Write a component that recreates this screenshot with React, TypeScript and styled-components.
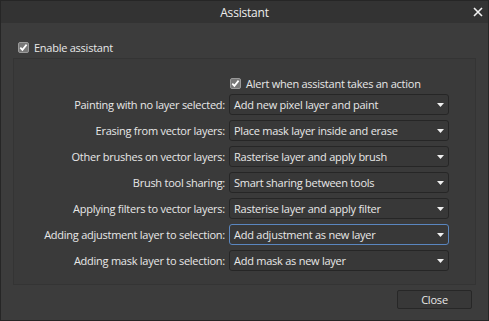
import React from 'react';
import styled, { createGlobalStyle } from 'styled-components';

const GlobalStyle = createGlobalStyle`
  html, body {
    margin: 0;
    padding: 0;
    background: #2b2b2b;
  }
  body {
    font-family: 'Open Sans', 'Noto Sans', sans-serif;
    font-size: 11px;
    letter-spacing: -0.25px;
    color: #e8e8e8;
  }
`;

const Dialog = styled.div`
  width: 489px;
  height: 321px;
  box-sizing: border-box;
  border: 1px solid #262626;
  background: #3c3c3c;
  display: flex;
  flex-direction: column;
`;

const TitleBar = styled.div`
  position: relative;
  height: 22px;
  background: #333333;
  display: flex;
  align-items: center;
  justify-content: center;
  font-size: 12px;
  letter-spacing: -0.2px;
  color: #eeeeee;
`;

const CloseX = styled.button`
  position: absolute;
  right: 5px;
  top: 6px;
  width: 10px;
  height: 10px;
  padding: 0;
  border: 0;
  background: transparent;
  display: flex;
`;

const Body = styled.div`
  flex: 1;
  display: flex;
  flex-direction: column;
  padding: 17px 12px 0 12px;
`;

const CheckRow = styled.label<{ indent?: number }>`
  display: flex;
  align-items: center;
  gap: 5px;
  height: 14px;
  padding-left: ${(p) => p.indent ?? 0}px;
  white-space: nowrap;
`;

const GroupBox = styled.div`
  margin-top: 4px;
  height: 227px;
  box-sizing: border-box;
  border: 1px solid #343434;
  background: #3a3a3a;
  padding: 18px 26px 0 0;
  display: grid;
  grid-template-columns: 211px 220px;
  grid-template-rows: 12px;
  column-gap: 4px;
  row-gap: 5px;
  grid-auto-rows: 21px;
  align-items: center;
  align-content: start;
`;

const Label = styled.div`
  text-align: right;
  white-space: nowrap;
`;

const Select = styled.div<{ focused?: boolean }>`
  height: 21px;
  box-sizing: border-box;
  border: 1px solid ${(p) => (p.focused ? '#5a86bf' : '#262626')};
  border-radius: 3px;
  background: #383838;
  display: flex;
  align-items: center;
  justify-content: space-between;
  padding: 0 4px 0 4px;
  white-space: nowrap;
`;

const Footer = styled.div`
  flex: 1;
  display: flex;
  justify-content: flex-end;
  align-items: flex-start;
  padding: 5px 4px 0 0;
`;

const Button = styled.button`
  width: 75px;
  height: 19px;
  box-sizing: border-box;
  border: 1px solid #272727;
  border-radius: 2px;
  background: #383838;
  color: #e8e8e8;
  font-family: inherit;
  font-size: 11px;
  letter-spacing: -0.2px;
  padding: 0;
`;

const Check = () => (
  <svg width="11" height="11" viewBox="0 0 11 11">
    <rect x="0.5" y="0.5" width="10" height="10" rx="1.5" fill="#777777" stroke="#9a9a9a" />
    <path d="M2.3 5.6 L4.4 7.9 L8.6 2.6" fill="none" stroke="#ffffff" strokeWidth="1.7" />
  </svg>
);

const Arrow = () => (
  <svg width="7" height="4" viewBox="0 0 7 4">
    <path d="M0 0 H7 L3.5 4 Z" fill="#f0f0f0" />
  </svg>
);

const rows: { label: string; value: string; focused?: boolean }[] = [
  { label: 'Painting with no layer selected:', value: 'Add new pixel layer and paint' },
  { label: 'Erasing from vector layers:', value: 'Place mask layer inside and erase' },
  { label: 'Other brushes on vector layers:', value: 'Rasterise layer and apply brush' },
  { label: 'Brush tool sharing:', value: 'Smart sharing between tools' },
  { label: 'Applying filters to vector layers:', value: 'Rasterise layer and apply filter' },
  { label: 'Adding adjustment layer to selection:', value: 'Add adjustment as new layer', focused: true },
  { label: 'Adding mask layer to selection:', value: 'Add mask as new layer' },
];

const App = () => (
  <>
    <GlobalStyle />
    <Dialog>
      <TitleBar>
        Assistant
        <CloseX type="button">
          <svg width="10" height="10" viewBox="0 0 10 10">
            <path d="M1 1 L9 9 M9 1 L1 9" stroke="#f2f2f2" strokeWidth="1.6" />
          </svg>
        </CloseX>
      </TitleBar>
      <Body>
        <CheckRow indent={5}>
          <Check />
          Enable assistant
        </CheckRow>
        <GroupBox>
          <div />
          <CheckRow indent={1}>
            <Check />
            Alert when assistant takes an action
          </CheckRow>
          {rows.map((r) => (
            <React.Fragment key={r.label}>
              <Label>{r.label}</Label>
              <Select focused={r.focused}>
                {r.value}
                <Arrow />
              </Select>
            </React.Fragment>
          ))}
        </GroupBox>
        <Footer>
          <Button type="button">Close</Button>
        </Footer>
      </Body>
    </Dialog>
  </>
);

export default App;
